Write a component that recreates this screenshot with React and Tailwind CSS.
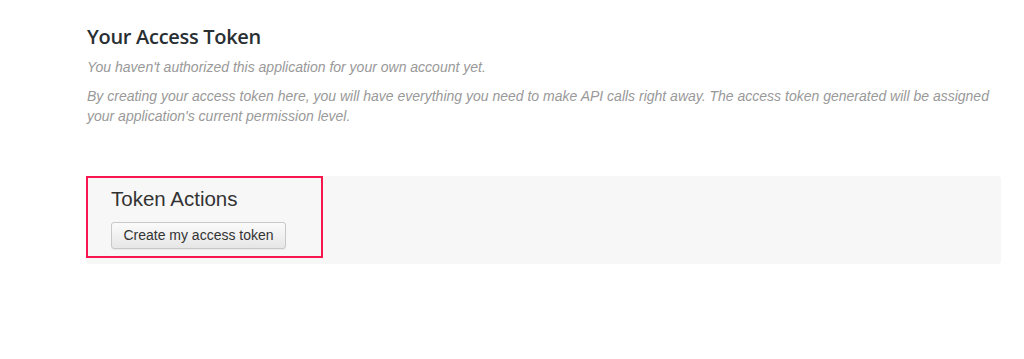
export default function App() {
    return (
        <div className="w-[1024px] h-[359px] bg-white overflow-hidden" style={{ fontFamily: '"Liberation Sans", Arial, sans-serif' }}>
            <div className="pl-[87px] pt-[24px]">
                {/* Header */}
                <h2 className="text-[20px] leading-[26px] font-semibold text-[#292f33] tracking-[-0.3px]" style={{ fontFamily: '"Open Sans", sans-serif' }}>
                    Your Access Token
                </h2>
                <p className="mt-[8px] text-[14px] leading-[19px] italic text-[#999]">
                    You haven't authorized this application for your own account yet.
                </p>
                <p className="mt-[9px] text-[14px] leading-[20px] italic text-[#999] w-[912px]">
                    By creating your access token here, you will have everything you need to make API calls right away. The access token generated will be assigned your application's current permission level.
                </p>
            </div>

            {/* Token actions panel */}
            <div className="mt-[50px] ml-[86px] w-[915px] h-[88px] bg-[#f7f7f7] rounded-[3px]">
                <div className="inline-flex flex-col w-[237px] h-[82px] border-2 border-[#f5174d] pl-[23px] pt-[9px]">
                    <h3 className="text-[20.5px] leading-[24px] text-[#333]">Token Actions</h3>
                    <button className="mt-[11px] w-[175px] h-[27px] rounded-[3px] border border-[#c8c8c8] bg-gradient-to-b from-[#fbfbfb] to-[#e6e6e6] text-[14px] text-[#333] shadow-[0_1px_1px_rgba(0,0,0,0.06)]">
                        Create my access token
                    </button>
                </div>
            </div>
        </div>
    );
}
